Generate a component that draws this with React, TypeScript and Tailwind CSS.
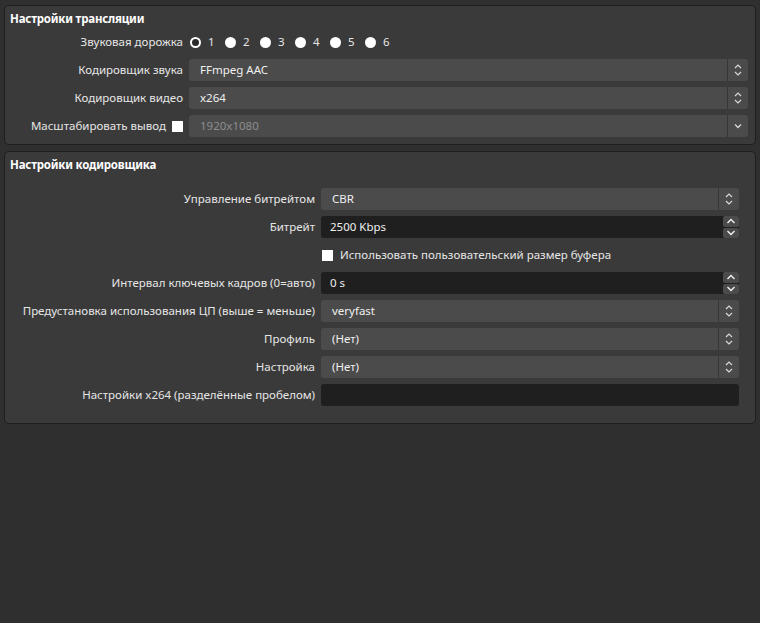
import type { ReactNode } from "react";

const font = { fontFamily: '"Noto Sans", "Open Sans", sans-serif' };

function UpDown() {
  return (
    <svg width="10" height="14" viewBox="0 0 10 14" fill="none">
      <path d="M2 5 L5 2 L8 5" stroke="#d8d8d8" strokeWidth="1.2" />
      <path d="M2 9 L5 12 L8 9" stroke="#d8d8d8" strokeWidth="1.2" />
    </svg>
  );
}

function Combo({ value, disabled }: { value: string; disabled?: boolean }) {
  return (
    <div className="flex h-[22px] flex-1 items-center rounded-[3px] bg-[#4b4b4b]">
      <span
        className={`flex-1 pl-[11px] text-[11.5px] ${
          disabled ? "text-[#8d8d8d]" : "text-[#f0f0f0]"
        }`}
      >
        {value}
      </span>
      <div className="flex h-full w-[21px] items-center justify-center border-l border-[#373737]">
        {disabled ? (
          <svg width="10" height="8" viewBox="0 0 10 8" fill="none">
            <path d="M2 2.5 L5 5.5 L8 2.5" stroke="#d8d8d8" strokeWidth="1.3" />
          </svg>
        ) : (
          <UpDown />
        )}
      </div>
    </div>
  );
}

function Spin({ value }: { value: string }) {
  return (
    <div className="flex h-[22px] flex-1 items-center">
      <div className="flex h-full flex-1 items-center rounded-l-[3px] bg-[#1f1f1f] pl-[9px] text-[11.5px] text-[#f0f0f0]">
        {value}
      </div>
      <div className="flex h-full w-[16px] flex-col gap-px bg-[#1f1f1f]">
        <div className="flex flex-1 items-center justify-center rounded-[2px] bg-[#4b4b4b]">
          <svg width="10" height="7" viewBox="0 0 10 7" fill="none">
            <path d="M1.5 5 L5 1.5 L8.5 5" stroke="#f2f2f2" strokeWidth="1.4" />
          </svg>
        </div>
        <div className="flex flex-1 items-center justify-center rounded-[2px] bg-[#4b4b4b]">
          <svg width="10" height="7" viewBox="0 0 10 7" fill="none">
            <path d="M1.5 2 L5 5.5 L8.5 2" stroke="#f2f2f2" strokeWidth="1.4" />
          </svg>
        </div>
      </div>
    </div>
  );
}

function Row({ label, w, children }: { label: ReactNode; w: string; children: ReactNode }) {
  return (
    <div className="flex h-[22px] items-center gap-[6px]">
      <div className={`${w} flex shrink-0 items-center justify-end text-[11.5px] text-[#e6e6e6]`}>
        {label}
      </div>
      {children}
    </div>
  );
}

function Box() {
  return <span className="inline-block h-[11px] w-[11px] bg-white" />;
}

function Group({ title, children, bottom }: { title: string; children: ReactNode; bottom: string }) {
  return (
    <div className={`rounded-[5px] border border-[#1e1e1e] bg-[#3a3a3a] pt-[6px] ${bottom}`}>
      <div className="h-[14px] pl-[5px] text-[11.5px] font-bold leading-[14px] tracking-[-0.2px] text-white">
        {title}
      </div>
      {children}
    </div>
  );
}

export default function App() {
  const tracks = ["1", "2", "3", "4", "5", "6"];
  return (
    <div className="h-[623px] w-[760px] bg-[#2f2f2f] pl-[4px] pr-[4px] pt-[5px]" style={font}>
      <Group title="Настройки трансляции" bottom="pb-[7px]">
        <div className="mt-[5px] flex flex-col gap-[6px] pr-[7px]">
          <Row label="Звуковая дорожка" w="w-[178px]">
            <div className="flex items-center pl-px">
              {tracks.map((t, i) => (
                <div key={t} className="flex w-[35px] items-center gap-[7px]">
                  {i === 0 ? (
                    <span className="h-[11px] w-[11px] rounded-full border-[2px] border-white bg-[#2a2a2a]" />
                  ) : (
                    <span className="h-[11px] w-[11px] rounded-full bg-white" />
                  )}
                  <span className="text-[11.5px] text-[#e6e6e6]">{t}</span>
                </div>
              ))}
            </div>
          </Row>
          <Row label="Кодировщик звука" w="w-[178px]">
            <Combo value="FFmpeg AAC" />
          </Row>
          <Row label="Кодировщик видео" w="w-[178px]">
            <Combo value="x264" />
          </Row>
          <Row
            label={
              <span className="flex items-center gap-[6px]">
                Масштабировать вывод <Box />
              </span>
            }
            w="w-[178px]"
          >
            <Combo value="1920x1080" disabled />
          </Row>
        </div>
      </Group>

      <div className="mt-[6px]">
        <Group title="Настройки кодировщика" bottom="pb-[17px]">
          <div className="mt-[16px] flex flex-col gap-[6px] pr-[16px]">
            <Row label="Управление битрейтом" w="w-[310px]">
              <Combo value="CBR" />
            </Row>
            <Row label="Битрейт" w="w-[310px]">
              <Spin value="2500 Kbps" />
            </Row>
            <Row label="" w="w-[310px]">
              <div className="flex items-center gap-[7px] pl-[1px] text-[11.5px] text-[#e6e6e6]">
                <Box />
                Использовать пользовательский размер буфера
              </div>
            </Row>
            <Row label="Интервал ключевых кадров (0=авто)" w="w-[310px]">
              <Spin value="0 s" />
            </Row>
            <Row label="Предустановка использования ЦП (выше = меньше)" w="w-[310px]">
              <Combo value="veryfast" />
            </Row>
            <Row label="Профиль" w="w-[310px]">
              <Combo value="(Нет)" />
            </Row>
            <Row label="Настройка" w="w-[310px]">
              <Combo value="(Нет)" />
            </Row>
            <Row label="Настройки x264 (разделённые пробелом)" w="w-[310px]">
              <div className="h-[22px] flex-1 rounded-[3px] bg-[#1f1f1f]" />
            </Row>
          </div>
        </Group>
      </div>
    </div>
  );
}
